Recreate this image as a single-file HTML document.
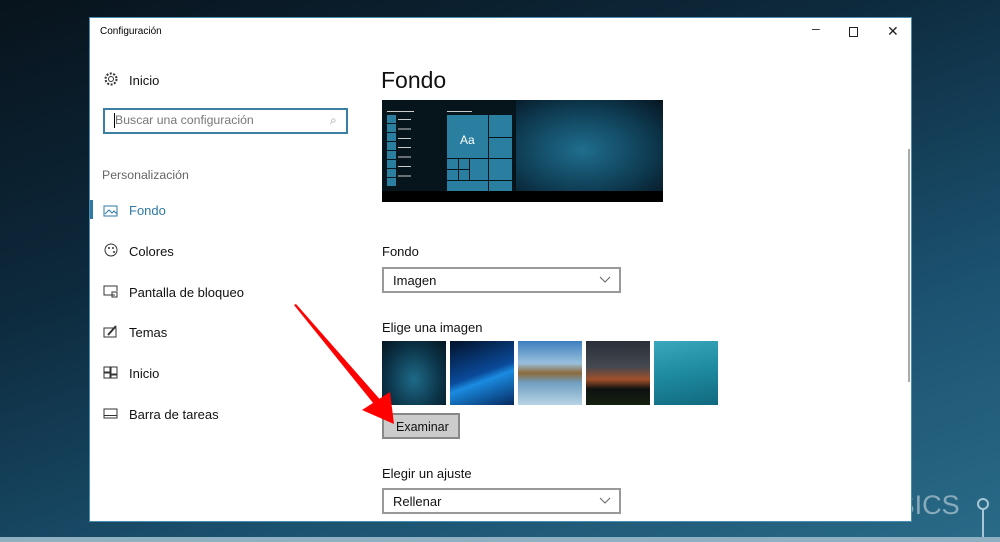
<!DOCTYPE html>
<html><head><meta charset="utf-8"><style>
*{margin:0;padding:0;box-sizing:border-box}
body{width:1000px;height:542px;overflow:hidden;position:relative;font-family:"Liberation Sans",sans-serif;
background:linear-gradient(160deg,#08131c 0%,#0d2a3d 35%,#1b5270 70%,#2a6b88 100%);}
.bot{position:absolute;left:0;top:537px;width:1000px;height:5px;background:#8fb0c0}
.wm{position:absolute;left:752px;top:490px;font-size:27px;color:rgba(255,255,255,.45);white-space:nowrap}
.win{position:absolute;left:89px;top:17px;width:823px;height:505px;background:#fff;border:1px solid #4a8db0}
.t{position:absolute;color:#000;white-space:nowrap}
.nav{position:absolute;left:39px;font-size:13px;color:#111}
.ico{position:absolute;left:13px}
.sel{position:absolute;left:34px;width:242px;height:26px;border:2px solid #999;font-size:13px;padding:4px 9px;color:#111}
.sel svg{position:absolute;right:8px;top:7px}
.th{position:absolute;top:323px;width:64px;height:64px}
</style></head><body>
<div class="wm">XATAKA BASICS</div>
<svg style="position:absolute;left:965px;top:492px" width="30" height="50"><circle cx="18" cy="12" r="5" fill="none" stroke="#a8c6d4" stroke-width="2"/><line x1="18" y1="17" x2="18" y2="46" stroke="#a8c6d4" stroke-width="2"/></svg>
<div class="bot"></div>
<div class="win">
<div class="t" style="left:10px;top:8px;font-size:10px">Configuración</div>
<div class="t" style="left:722px;top:2px;font-size:14px;color:#333">&#8211;</div>
<div style="position:absolute;left:759px;top:9px;width:9px;height:10px;border:1px solid #222"></div>
<div class="t" style="left:797px;top:5px;font-size:14px;color:#222">✕</div>

<svg class="ico" style="top:53px" width="16" height="16" viewBox="0 0 16 16"><circle cx="8" cy="8" r="2.5" fill="none" stroke="#333"/><circle cx="8" cy="8" r="5.5" fill="none" stroke="#333" stroke-dasharray="2 1.5" stroke-width="2"/></svg>
<div class="nav" style="top:55px">Inicio</div>
<div style="position:absolute;left:13px;top:90px;width:245px;height:26px;border:2px solid #3b7fa3"></div>
<div style="position:absolute;left:24px;top:95px;width:1px;height:15px;background:#000"></div>
<div class="t" style="left:25px;top:95px;font-size:12.3px;color:#777">Buscar una configuración</div>
<div class="t" style="left:240px;top:95px;font-size:12px;color:#999">&#x2315;</div>
<div class="t" style="left:12px;top:150px;font-size:12.3px;color:#666">Personalización</div>
<div style="position:absolute;left:0;top:182px;width:3px;height:19px;background:#2e7aa5"></div>
<svg class="ico" style="top:186px" width="16" height="14"><rect x="1" y="2" width="13" height="10" fill="none" stroke="#2e7aa5"/><path d="M2 10l4-4 3 3 2-2 3 3" fill="none" stroke="#2e7aa5"/></svg>
<div class="nav" style="top:185px;color:#2e7aa5">Fondo</div>
<svg class="ico" style="top:224px" width="16" height="16"><circle cx="8" cy="8" r="6" fill="none" stroke="#333"/><circle cx="6" cy="6" r="1" fill="#333"/><circle cx="10" cy="6" r="1" fill="#333"/><circle cx="11" cy="10" r="1" fill="#333"/></svg>
<div class="nav" style="top:226px">Colores</div>
<svg class="ico" style="top:266px" width="16" height="14"><path d="M12 11H1V2h13v5" fill="none" stroke="#333"/><rect x="9" y="8" width="5" height="5" fill="none" stroke="#333"/></svg>
<div class="nav" style="top:267px">Pantalla de bloqueo</div>
<svg class="ico" style="top:307px" width="16" height="14"><rect x="1" y="3" width="12" height="9" fill="none" stroke="#333"/><path d="M5 10l8-9" stroke="#333" stroke-width="2"/></svg>
<div class="nav" style="top:307px">Temas</div>
<svg class="ico" style="top:348px" width="16" height="14"><rect x="1" y="1" width="6" height="5" fill="none" stroke="#333"/><rect x="8" y="1" width="6" height="7" fill="none" stroke="#333"/><rect x="1" y="7" width="6" height="5" fill="none" stroke="#333"/><rect x="8" y="9" width="6" height="3" fill="none" stroke="#333"/></svg>
<div class="nav" style="top:348px">Inicio</div>
<svg class="ico" style="top:390px" width="16" height="12"><rect x="1" y="1" width="13" height="9" fill="none" stroke="#333"/><line x1="1" y1="7.5" x2="14" y2="7.5" stroke="#333"/></svg>
<div class="nav" style="top:389px">Barra de tareas</div>

<div class="t" style="left:291px;top:49px;font-size:23px;color:#111">Fondo</div>
<div style="position:absolute;left:292px;top:82px;width:281px;height:102px;background:#000">
 <div style="position:absolute;left:134px;top:0;width:147px;height:91px;background:radial-gradient(ellipse at 45% 55%,#1f6e8e,#0e3b52 60%,#061520)"></div>
 <div style="position:absolute;left:0;top:0;width:134px;height:91px;background:#06141b"></div>
 <div style="position:absolute;left:5px;top:11px;width:27px;height:1px;background:#ccc"></div>
 <div style="position:absolute;left:65px;top:11px;width:25px;height:1px;background:#ccc"></div>
 <div style="position:absolute;left:5px;top:15px;width:9px;height:72px;background:repeating-linear-gradient(#2a7fa0 0 8px,#06141b 8px 9px)"></div>
 <div style="position:absolute;left:16px;top:19px;width:13px;height:66px;background:repeating-linear-gradient(#ccc 0 1px,transparent 1px 9.4px)"></div>
 <div style="position:absolute;left:65px;top:15px;width:65px;height:76px;background:#2a7fa0"></div>
 <div style="position:absolute;left:106px;top:15px;width:1px;height:76px;background:#06141b"></div>
 <div style="position:absolute;left:65px;top:58px;width:65px;height:1px;background:#06141b"></div>
 <div style="position:absolute;left:106px;top:37px;width:24px;height:1px;background:#06141b"></div>
 <div style="position:absolute;left:65px;top:69px;width:22px;height:1px;background:#06141b"></div>
 <div style="position:absolute;left:65px;top:80px;width:65px;height:1px;background:#06141b"></div>
 <div style="position:absolute;left:76px;top:58px;width:1px;height:22px;background:#06141b"></div>
 <div style="position:absolute;left:87px;top:58px;width:1px;height:22px;background:#06141b"></div>
 <div class="t" style="left:78px;top:33px;color:#fff;font-size:12px">Aa</div>
</div>
<div class="t" style="left:292px;top:226px;font-size:13px;color:#111">Fondo</div>
<div class="sel" style="left:292px;top:249px;width:239px">Imagen<svg width="12" height="8"><path d="M1 1l5 5 5-5" fill="none" stroke="#666"/></svg></div>
<div class="t" style="left:292px;top:302px;font-size:13px;color:#111">Elige una imagen</div>
<div class="th" style="left:292px;background:radial-gradient(ellipse at 50% 60%,#1e6a88,#0b3347 60%,#051520)"></div>
<div class="th" style="left:360px;background:linear-gradient(160deg,#03122a,#0a4a9a 50%,#1a8be0 60%,#062a60)"></div>
<div class="th" style="left:428px;background:linear-gradient(#3d7fc0 0,#9ac0dc 35%,#8d6a3a 50%,#6f9fc0 65%,#b8d4e6 100%)"></div>
<div class="th" style="left:496px;background:linear-gradient(#2a2e38,#444850 40%,#a0502a 60%,#0e1210 75%,#142010)"></div>
<div class="th" style="left:564px;background:linear-gradient(170deg,#3aa7bd,#1e8aa0 50%,#11697e)"></div>
<div style="position:absolute;left:292px;top:395px;width:78px;height:26px;background:#ccc;border:2px solid #888;font-size:12.5px;padding:5px 0 0 12px;color:#111">Examinar</div>
<div class="t" style="left:292px;top:448px;font-size:13px;color:#111">Elegir un ajuste</div>
<div class="sel" style="left:292px;top:470px;width:239px">Rellenar<svg width="12" height="8"><path d="M1 1l5 5 5-5" fill="none" stroke="#666"/></svg></div>
<div style="position:absolute;left:818px;top:131px;width:2px;height:233px;background:#aaa"></div>
</div>
<svg style="position:absolute;left:0;top:0" width="1000" height="542"><polygon points="294,305 296,304 384,404 378,409" fill="#f00"/><polygon points="362,410 390,392 394,424" fill="#f00"/></svg>
</body></html>
